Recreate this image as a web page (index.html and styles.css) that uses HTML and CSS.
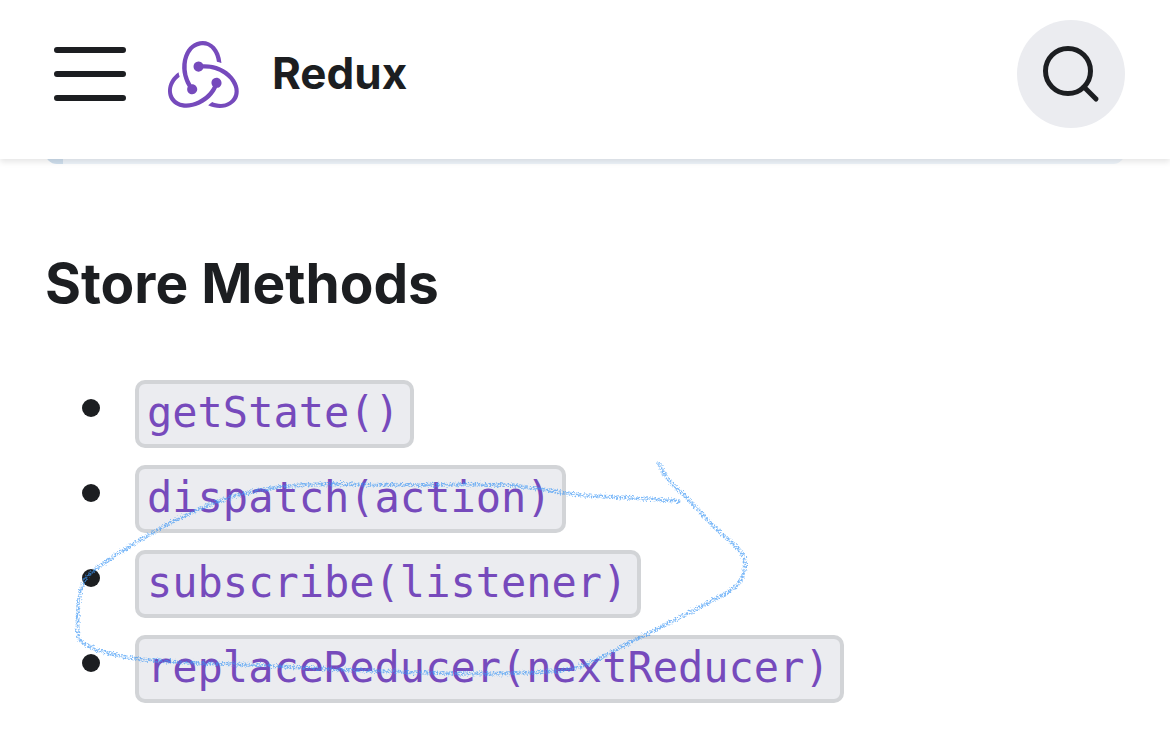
FILE: index.html
```
<!DOCTYPE html>
<html lang="en">
<head>
    <meta charset="UTF-8">
    <meta name="viewport" content="width=device-width, initial-scale=1.0">
    <title>Store | Redux</title>
    <link rel="stylesheet" href="styles.css">
</head>
<body>
    <header class="navbar">
        <button class="navbar-toggle" type="button" aria-label="Open menu">
            <svg width="90" height="90" viewBox="0 0 30 30">
                <path d="M4 7h22M4 15h22M4 23h22" stroke="currentColor" stroke-width="2" stroke-linecap="round"/>
            </svg>
        </button>
        <a class="brand" href="#">
            <svg width="90" height="90" viewBox="0 0 100 100" fill="#764abc" aria-hidden="true">
                <path d="M65.6 65.4c2.9-.3 5.1-2.8 5-5.8-.1-3-2.6-5.4-5.6-5.4h-.2c-3.1.1-5.5 2.7-5.4 5.8.1 1.5.7 2.8 1.6 3.7-3.4 6.7-8.6 11.6-16.4 15.7-5.3 2.8-10.8 3.8-16.3 3.1-4.5-.6-8-2.6-10.2-5.9-3.2-4.9-3.5-10.2-.8-15.5 1.9-3.8 4.9-6.6 6.8-8-.4-1.3-1-3.5-1.3-5.1-14.5 10.5-13 24.7-8.6 31.4 3.3 5 10 8.1 17.4 8.1 2 0 4-.2 6-.7 12.8-2.5 22.5-10.1 28-21.4z"/>
                <path d="M83.2 53c-7.6-8.9-18.8-13.8-31.6-13.8H50c-.9-1.8-2.8-3-4.9-3h-.2c-3.1.1-5.5 2.7-5.4 5.8.1 3 2.6 5.4 5.6 5.4h.2c2.2-.1 4.1-1.5 4.9-3.4H52c7.6 0 14.8 2.2 21.3 6.5 5 3.3 8.6 7.6 10.6 12.8 1.7 4.2 1.6 8.3-.2 11.8-2.8 5.3-7.5 8.2-13.7 8.2-4 0-7.8-1.2-9.8-2.1-1.1 1-3.1 2.6-4.5 3.6 4.3 2 8.7 3.1 12.9 3.1 9.6 0 16.7-5.3 19.4-10.6 2.9-5.8 2.7-15.8-4.8-24.3z"/>
                <path d="M32.4 67.1c.1 3 2.6 5.4 5.6 5.4h.2c3.1-.1 5.5-2.7 5.4-5.8-.1-3-2.6-5.4-5.6-5.4h-.2c-.2 0-.5 0-.7.1-4.1-6.8-5.8-14.2-5.2-22.2.4-6 2.4-11.2 5.9-15.5 2.9-3.7 8.5-5.5 12.3-5.6 10.6-.2 15.1 13 15.4 18.3 1.3.3 3.5 1 5 1.5-1.2-16.2-11.2-24.6-20.8-24.6-9 0-17.3 6.5-20.6 16.1-4.6 12.8-1.6 25.1 4 34.8-.5.7-.8 1.8-.7 2.9z"/>
            </svg>
            <span>Redux</span>
        </a>
        <button class="search" type="button" aria-label="Search">
            <svg width="60" height="60" viewBox="0 0 60 60" fill="none" stroke="currentColor" stroke-width="5">
                <circle cx="27" cy="27" r="22.5"/>
                <path d="M43 43L55 55" stroke-linecap="round"/>
            </svg>
        </button>
    </header>

    <main class="content">
        <div class="note"></div>
        <h3>Store Methods</h3>
        <ul class="methods">
            <li><a href="#getstate"><code>getState()</code></a></li>
            <li><a href="#dispatchaction"><code>dispatch(action)</code></a></li>
            <li><a href="#subscribelistener"><code>subscribe(listener)</code></a></li>
            <li><a href="#replacereducernextreducer"><code>replaceReducer(nextReducer)</code></a></li>
        </ul>
    </main>

    <!-- crayon mark around subscribe() -->
    <svg class="scribble" width="700" height="240" viewBox="60 450 700 240" fill="none" aria-hidden="true">
        <filter id="crayon" filterUnits="userSpaceOnUse" x="60" y="450" width="700" height="240">
            <feTurbulence type="fractalNoise" baseFrequency="0.6" numOctaves="2" seed="4" result="noise"/>
            <feDisplacementMap in="SourceGraphic" in2="noise" scale="5" xChannelSelector="R" yChannelSelector="G" result="rough"/>
            <feColorMatrix in="noise" type="matrix" values="0 0 0 0 0  0 0 0 0 0  0 0 0 0 0  0 0 0 4 -1.4" result="grain"/>
            <feComposite in="rough" in2="grain" operator="in"/>
        </filter>
        <path filter="url(#crayon)" d="M659 464C663 475 672 485 684 495C701 513 714 528 730 541C741 550 746 557 745 567C744 580 736 589 719 597C686 615 656 629 625 645C602 658 582 669 556 671C520 674 480 674 440 673C370 671 300 668 260 665C210 664 160 662 130 658C105 653 87 648 80 640C76 632 77 600 83 583C88 571 106 562 127 548C160 527 195 509 228 498C262 487 300 484 340 484C400 486 460 484 510 485C540 488 565 494 590 496C625 497 655 499 679 501"/>
    </svg>
</body>
</html>
```
FILE: styles.css
```
* {
    box-sizing: border-box;
}
body {
    font-family: Inter, "Liberation Sans", sans-serif;
    background-color: #fff;
    color: #1c1e21;
    margin: 0;
    position: relative;
}
button {
    border: none;
    padding: 0;
    color: inherit;
    background: none;
    cursor: pointer;
}
svg {
    display: block;
}
.navbar {
    position: relative;
    z-index: 1;
    display: flex;
    align-items: center;
    padding: 20px 45px 31px;
    background-color: #fff;
    box-shadow: 0 3px 6px rgba(0, 0, 0, 0.1);
}
.brand {
    display: flex;
    align-items: center;
    gap: 24px;
    margin-left: 23px;
    color: inherit;
    font-size: 44px;
    font-weight: 700;
    line-height: 54px;
    text-decoration: none;
}
.brand span {
    padding-bottom: 3px;
}
.search {
    display: flex;
    align-items: center;
    justify-content: center;
    width: 108px;
    height: 108px;
    margin-left: auto;
    border-radius: 50%;
    background-color: #ebecf0;
}
.content {
    padding: 0 45px;
}
/* bottom edge of the note scrolled under the navbar */
.note {
    height: 24px;
    margin-top: -19px;
    border-left: 18px solid #cfdfee;
    border-radius: 18px;
    background-color: #eef4fa;
}
h3 {
    margin: 84px 0 62px;
    font-size: 55px;
    line-height: 70px;
}
.methods {
    display: flex;
    flex-direction: column;
    gap: 17px;
    margin: 0;
    padding: 0 0 0 37px;
    list-style: none;
}
.methods li {
    display: flex;
    gap: 35px;
}
.methods li::before {
    content: "";
    width: 18px;
    height: 18px;
    margin-top: 19px;
    border-radius: 50%;
    background-color: #1c1e21;
}
.methods a {
    color: #764abc;
    text-decoration: none;
}
code {
    display: block;
    padding: 4px 10px 6px 8px;
    border: 4px solid #d2d4d7;
    border-radius: 10px;
    background-color: #ebecf0;
    font-family: "DejaVu Sans Mono", monospace;
    font-size: 42px;
    line-height: 50px;
}
.scribble {
    position: absolute;
    top: 450px;
    left: 60px;
    pointer-events: none;
    stroke: #3b96f5;
    stroke-width: 4;
    stroke-linecap: round;
    opacity: 0.65;
}
```
